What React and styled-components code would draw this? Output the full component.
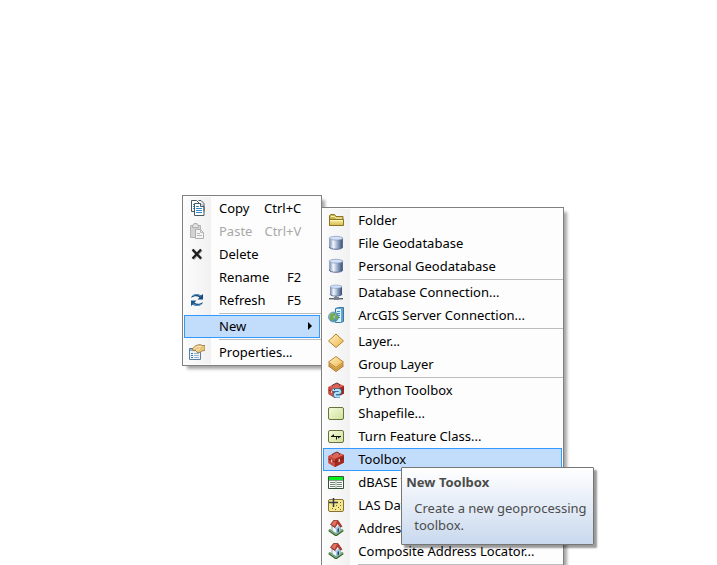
import React from 'react';
import styled, { createGlobalStyle, css } from 'styled-components';

const GlobalStyle = createGlobalStyle`
  body {
    margin: 0;
    background: #fff;
    font-family: "Noto Sans", "Noto Sans CJK SC", sans-serif;
    font-size: 13px;
    color: #000;
  }
`;

const Desktop = styled.main`
  position: relative;
  height: 100vh;
  overflow: hidden;
`;

const MenuList = styled.ul`
  position: absolute;
  box-sizing: border-box;
  margin: 0;
  padding: 1px;
  list-style: none;
  border: 1px solid #808080;
  background: linear-gradient(to right, #fcfcfc, #f1f1f1) 1px 1px / 27px calc(100% - 2px) no-repeat #fdfdfd;
  box-shadow: 4px 4px 3px -1px rgba(0, 0, 0, 0.35);
`;

const ContextMenu = styled(MenuList)`
  left: 182px;
  top: 195px;
  min-width: 140px;
`;

const SubMenu = styled(MenuList)`
  left: calc(100% + 1px);
  top: -108px;
  min-width: 243px;
  padding-bottom: 24px;
`;

const Entry = styled.li`
  position: relative;
`;

const Item = styled.button`
  display: flex;
  align-items: center;
  box-sizing: border-box;
  width: 100%;
  height: 23px;
  margin: 0;
  padding: 0 18px 1px 4px;
  border: 1px solid transparent;
  background: transparent;
  font: inherit;
  line-height: 20px;
  color: inherit;
  text-align: left;
  white-space: nowrap;

  &:disabled {
    color: #a8a8a8;
  }

  ${(props) =>
    props.$active &&
    css`
      border-color: #3399ff;
      background: #c2dcfb;
      padding-right: 6px;
    `}
`;

const IconSlot = styled.span`
  display: flex;
  flex: none;
  width: 16px;
  height: 16px;
  margin-right: 14px;
`;

const Label = styled.span`
  flex: 1;
`;

const Shortcut = styled.span`
  margin-left: 12px;
`;

const Separator = styled.li`
  height: 1px;
  margin: 1px -1px 1px 35px;
  background: #bdbdbd;
`;

const Tooltip = styled.div`
  position: absolute;
  z-index: 1;
  left: 78px;
  top: 19px;
  box-sizing: border-box;
  width: 193px;
  padding: 4px 4px 10px;
  border: 1px solid #767676;
  border-radius: 1px;
  background: linear-gradient(#ffffff, #c9d9ee);
  box-shadow: 3px 3px 2px rgba(0, 0, 0, 0.4);
  color: #4c4c4c;
`;

const TipTitle = styled.strong`
  display: block;
  line-height: 20px;
`;

const TipText = styled.p`
  margin: 8px 0 0 8px;
  line-height: 17px;
`;

const Svg = ({ children }) => (
  <svg width="16" height="16" viewBox="0 0 16 16" aria-hidden="true">
    {children}
  </svg>
);

const Gradients = () => (
  <svg width="0" height="0" style={{ position: 'absolute' }} aria-hidden="true">
    <defs>
      <linearGradient id="steel">
        <stop offset="0" stopColor="#6f86ab" />
        <stop offset="0.3" stopColor="#f4f8ff" />
        <stop offset="0.55" stopColor="#a9bad4" />
        <stop offset="1" stopColor="#34496f" />
      </linearGradient>
      <linearGradient id="gold" x1="0" y1="0" x2="1" y2="1">
        <stop offset="0" stopColor="#fff3c4" />
        <stop offset="1" stopColor="#eeb54c" />
      </linearGradient>
      <linearGradient id="folder" x1="0" y1="0" x2="0" y2="1">
        <stop offset="0" stopColor="#fbf0a4" />
        <stop offset="1" stopColor="#d5bb4a" />
      </linearGradient>
      <linearGradient id="leaf" x1="0" y1="0" x2="1" y2="1">
        <stop offset="0" stopColor="#f6fbdc" />
        <stop offset="1" stopColor="#cfe09a" />
      </linearGradient>
      <radialGradient id="globe" cx="0.35" cy="0.35">
        <stop offset="0" stopColor="#e4f5ff" />
        <stop offset="1" stopColor="#4c94bf" />
      </radialGradient>
    </defs>
  </svg>
);

const CopyIcon = () => (
  <Svg>
    <path d="M2.5 .5h5l3 3v8h-8z" fill="#fff" stroke="#4a5862" />
    <path d="M4 4.5h2M4 6.500h2M4 8.500h2" stroke="#2f8bd0" />
    <path d="M5.500 3.500h6l3.500 3v9H5.500z" fill="#fff" stroke="#4a5862" />
    <path d="M9.500 .5h2.500l3 3v8" fill="none" stroke="#4a5862" />
    <path d="M11.500 3.500v3H15" fill="#dfe8ee" stroke="#4a5862" />
    <path d="M7 6.500h3M7 8.500h6M7 10.500h6M7 12.500h6" stroke="#2f8bd0" />
  </Svg>
);

const PasteIcon = () => (
  <Svg>
    <path d="M1.500 2.500h10v12h-10z" fill="#d2d2d2" stroke="#b5b5b5" />
    <path d="M3.500 4.500V2H5V.500h3V2h1.500v2.500z" fill="#e6e6e6" stroke="#b0b0b0" />
    <path d="M6.500 6.500h5l3 3v6h-8z" fill="#f4f4f4" stroke="#b0b0b0" />
    <path d="M11.500 6.500v3h3M8 10.500h3M8 12.500h5" fill="none" stroke="#b8b8b8" />
  </Svg>
);

const DeleteIcon = () => (
  <Svg>
    <path d="M4 4l8.500 9M12.500 4L4 13" stroke="#aaa" strokeWidth="3" />
    <path d="M3.500 3.500l8.500 9M12 3.500l-8.500 9" stroke="#1d1d1d" strokeWidth="2.200" />
  </Svg>
);

const RefreshIcon = () => (
  <Svg>
    <path d="M2 6C3 2 8.500 .500 12 3.500L14 2v5.500H8.500l2-2C8 3.500 5 4 2 6z" fill="#174a7e" />
    <path d="M14 10c-1 4-6.500 5.500-10 2.500L2 14V8.500h5.500l-2 2c2.500 2 5.500 1.500 8.500-.5z" fill="#1f568c" />
    <path d="M4 3.800C6 2 9 2 11.500 4.200M12 12.200c-2 1.800-5 1.800-7.500-.4" fill="none" stroke="#6fabd8" />
  </Svg>
);

const PropertiesIcon = () => (
  <Svg>
    <path d="M.500 4.500h11v11H.500z" fill="#eef5fb" stroke="#5c7f9e" />
    <path d="M1 5h10v2H1z" fill="#91b5d2" />
    <path d="M2 9h2v1H2zM2 11h2v1H2zM2 13h2v1H2z" fill="#347db8" />
    <path d="M5 9.500h5M5 11.500h5M5 13.500h5" stroke="#9eb4c5" />
    <path d="M3.500 4.500L7 1.500l4-1 2 1h3v5l-3 .5-2 1.500H8L7 6.500l-3 .3z" fill="#e8c37b" stroke="#906a31" strokeWidth=".7" />
    <path d="M5 4.500l3.500-2h4M7 6.500l4-2" fill="none" stroke="#fff0c4" />
  </Svg>
);

const FolderIcon = () => (
  <Svg>
    <path d="M1.500 13.500v-10l1-1h4l1.500 2h7v9z" fill="#cdb550" stroke="#8b7525" />
    <path d="M3 4.500h3.500L8 6h6" fill="none" stroke="#fff5b5" />
    <path d="M1.500 7.500h14v6h-14z" fill="url(#folder)" stroke="#8b7525" />
    <path d="M2.500 8.500h12" stroke="#fff8c0" />
  </Svg>
);

const Cylinder = () => (
  <>
    <path d="M1.200 3v9c0 3 13.600 3 13.600 0V3z" fill="url(#steel)" />
    <path d="M1.200 12c0 3 13.600 3 13.600 0" fill="none" stroke="#5b6f93" />
    <ellipse cx="8" cy="3.200" rx="6.800" ry="1.900" fill="#d3e1f6" stroke="#8296ba" strokeWidth=".7" />
  </>
);

const DatabaseIcon = () => (
  <Svg>
    <Cylinder />
  </Svg>
);

const ConnectionIcon = () => (
  <Svg>
    <g transform="translate(1 0) scale(.88 .85)">
      <Cylinder />
    </g>
    <path d="M8 12v2M1 14.500h14" stroke="#59616d" fill="none" />
    <path d="M1 15.500h14" stroke="#b1b8c0" />
    <path d="M6 13h5v3H6z" fill="#77808c" />
  </Svg>
);

const ServerIcon = () => (
  <Svg>
    <path d="M7.500 1.500l3-1h5v14l-3 1h-5z" fill="#65a5cd" stroke="#3879a4" />
    <path d="M8 2h5v13H8z" fill="#d9f1fd" />
    <path d="M9 4.500h3M9 6.500h3M9 8.500h3M9 10.500h3" stroke="#408fc0" />
    <circle cx="5.500" cy="10" r="5" fill="url(#globe)" stroke="#5b91aa" strokeWidth=".7" />
    <path d="M2 7.500l3-1.800 2.500 1-.5 2-2 .8 1 2.500-1.500 2C2 13 1 11 2 7.500zM8 8l2 1v2l-2 2-1-2z" fill="#75aa45" />
  </Svg>
);

const LayerIcon = () => (
  <Svg>
    <path d="M8 1l7.500 7L8 14.500.500 8z" fill="url(#gold)" stroke="#b6812c" />
  </Svg>
);

const GroupLayerIcon = () => (
  <Svg>
    <path d="M.500 10L8 15.500l7.500-5.500L8 4z" fill="#e4ac4e" stroke="#a8772d" />
    <path d="M.500 8L8 13.500 15.500 8 8 2z" fill="#edba62" stroke="#b98637" />
    <path d="M.500 6L8 11.500 15.500 6 8 .500z" fill="url(#gold)" stroke="#b98637" />
  </Svg>
);

const Toolbox = () => (
  <>
    <path d="M.500 5L9 1l7 3v7.500L7 16 .500 12z" fill="#a92d27" />
    <path d="M.500 5L9 1l7 3-9 4z" fill="#dc6557" />
    <path d="M.500 5L7 8v8L.500 12z" fill="#cb4a3e" />
    <path d="M7 8l9-4v7.500L7 16z" fill="#a32a20" />
    <path d="M.500 8L7 11l9-4" fill="none" stroke="#6e1b16" strokeWidth=".8" />
    <path d="M4.500 4.500V3l4.500-2 2.500 1.500V4" fill="none" stroke="#6a3a37" />
    <path d="M3 8.500l1.200.5v2.500L3 11zM10.500 8.500l1.500-.7v2.700l-1.500.7z" fill="#f0c9bf" />
  </>
);

const ToolboxIcon = () => (
  <Svg>
    <Toolbox />
  </Svg>
);

const PythonIcon = () => (
  <Svg>
    <Toolbox />
    <path d="M5 8h5.500c2 0 2 3 0 3H8.500c-2.500 0-2 3.500 0 3.500H12" fill="none" stroke="#2d76aa" strokeWidth="3.600" />
    <path d="M4.500 8h6c2 0 2 3 0 3h-2c-2.500 0-2 3.500 0 3.500H12" fill="none" stroke="#b5e1f7" strokeWidth="2" />
    <path d="M6 7h1v1H6z" fill="#174a7e" />
  </Svg>
);

const ShapeIcon = () => (
  <Svg>
    <rect x=".500" y="2.500" width="15" height="12" rx="1.500" fill="url(#leaf)" stroke="#66733f" />
  </Svg>
);

const TurnIcon = () => (
  <Svg>
    <rect x=".500" y="2.500" width="15" height="12" rx="1.500" fill="url(#leaf)" stroke="#66733f" />
    <path d="M3 8.500h10M8.500 8.500v3" stroke="#151515" fill="none" />
    <path d="M6 6v2.500L3 8.500zM10 10.500V8.500h3z" fill="#151515" />
  </Svg>
);

const TableIcon = () => (
  <Svg>
    <path d="M.500 2.500h15v12H.500z" fill="#fff" stroke="#39513b" />
    <path d="M1 3h14v3H1z" fill="#00f01c" />
    <path d="M1 6.500h14M8 6v8" stroke="#8ba08d" />
    <path d="M2 8.500h5M9 8.500h5M2 10.500h5M9 10.500h5M2 12.500h5M9 12.500h5" stroke="#71857a" />
  </Svg>
);

const LasIcon = () => (
  <Svg>
    <rect x=".500" y="2.500" width="15" height="12" rx="1.500" fill="#f5e78c" stroke="#827239" />
    <path d="M5.500 1v9M1 5.500h9" stroke="#343b45" strokeWidth="1.500" />
    <path d="M8 8h1v1H8zM10 10h1v1h-1zM12 12h1v1h-1zM12 5h1v1h-1zM4 11h1v1H4zM7 12h1v1H7zM12 8h1v1h-1z" fill="#756521" />
  </Svg>
);

const AddressIcon = () => (
  <Svg>
    <path d="M1 10l7 5 7-5" fill="none" stroke="#315d2c" strokeWidth="2.600" />
    <path d="M1 9.500l7 5 7-5" fill="none" stroke="#7bbb6b" strokeWidth="1.200" />
    <path d="M4 5.500l4 3 4.500-4V11L8 13.500 4 11z" fill="#eef6fd" stroke="#607f99" strokeWidth=".7" />
    <path d="M8 8.500l4.500-3V11L8 13.500z" fill="#a5c6e0" />
    <path d="M2.500 4.500L5.500 .500h4.500L14 6.500l-1.500.5L9.500 3.500 7 7.500z" fill="#bd392d" stroke="#812920" strokeWidth=".7" />
    <path d="M3.500 4.200L6 1h3L6.800 6.200z" fill="#de7463" />
    <path d="M9.500 9l1.500-1v3.500l-1.500 1z" fill="#27435c" />
  </Svg>
);

const ArrowIcon = () => (
  <svg width="6" height="8" viewBox="0 0 6 8" aria-hidden="true">
    <path d="M1 0l4 4-4 4z" fill="#000" />
  </svg>
);

const newItems = [
  { label: 'Folder', icon: FolderIcon },
  { label: 'File Geodatabase', icon: DatabaseIcon },
  { label: 'Personal Geodatabase', icon: DatabaseIcon },
  null,
  { label: 'Database Connection...', icon: ConnectionIcon },
  { label: 'ArcGIS Server Connection...', icon: ServerIcon },
  null,
  { label: 'Layer...', icon: LayerIcon },
  { label: 'Group Layer', icon: GroupLayerIcon },
  null,
  { label: 'Python Toolbox', icon: PythonIcon },
  { label: 'Shapefile...', icon: ShapeIcon },
  { label: 'Turn Feature Class...', icon: TurnIcon },
  { label: 'Toolbox', icon: ToolboxIcon, active: true, tip: 'Create a new geoprocessing toolbox.' },
  { label: 'dBASE Table', icon: TableIcon },
  { label: 'LAS Dataset', icon: LasIcon },
  { label: 'Address Locator...', icon: AddressIcon },
  { label: 'Composite Address Locator...', icon: AddressIcon },
  null,
];

const mainItems = [
  { label: 'Copy', shortcut: 'Ctrl+C', icon: CopyIcon },
  { label: 'Paste', shortcut: 'Ctrl+V', icon: PasteIcon, disabled: true },
  { label: 'Delete', icon: DeleteIcon },
  { label: 'Rename', shortcut: 'F2' },
  { label: 'Refresh', shortcut: 'F5', icon: RefreshIcon },
  null,
  { label: 'New', active: true, items: newItems },
  null,
  { label: 'Properties...', icon: PropertiesIcon },
];

function MenuEntry({ item }) {
  const Icon = item.icon;
  return (
    <Entry role="none">
      <Item
        type="button"
        role="menuitem"
        disabled={item.disabled}
        $active={item.active}
        aria-haspopup={item.items ? 'menu' : undefined}
        aria-expanded={item.items ? true : undefined}
        aria-describedby={item.tip ? 'tip' : undefined}
      >
        <IconSlot>{Icon && <Icon />}</IconSlot>
        <Label>{item.label}</Label>
        {item.shortcut && <Shortcut>{item.shortcut}</Shortcut>}
        {item.items && <ArrowIcon />}
      </Item>
      {item.items && (
        <SubMenu role="menu" aria-label={item.label}>
          <MenuItems items={item.items} />
        </SubMenu>
      )}
      {item.tip && (
        <Tooltip role="tooltip" id="tip">
          <TipTitle>New {item.label}</TipTitle>
          <TipText>{item.tip}</TipText>
        </Tooltip>
      )}
    </Entry>
  );
}

function MenuItems({ items }) {
  return items.map((item, i) =>
    item ? <MenuEntry key={item.label} item={item} /> : <Separator key={i} role="separator" />
  );
}

export default function App() {
  return (
    <Desktop>
      <GlobalStyle />
      <Gradients />
      <ContextMenu role="menu" aria-label="Item actions">
        <MenuItems items={mainItems} />
      </ContextMenu>
    </Desktop>
  );
}
